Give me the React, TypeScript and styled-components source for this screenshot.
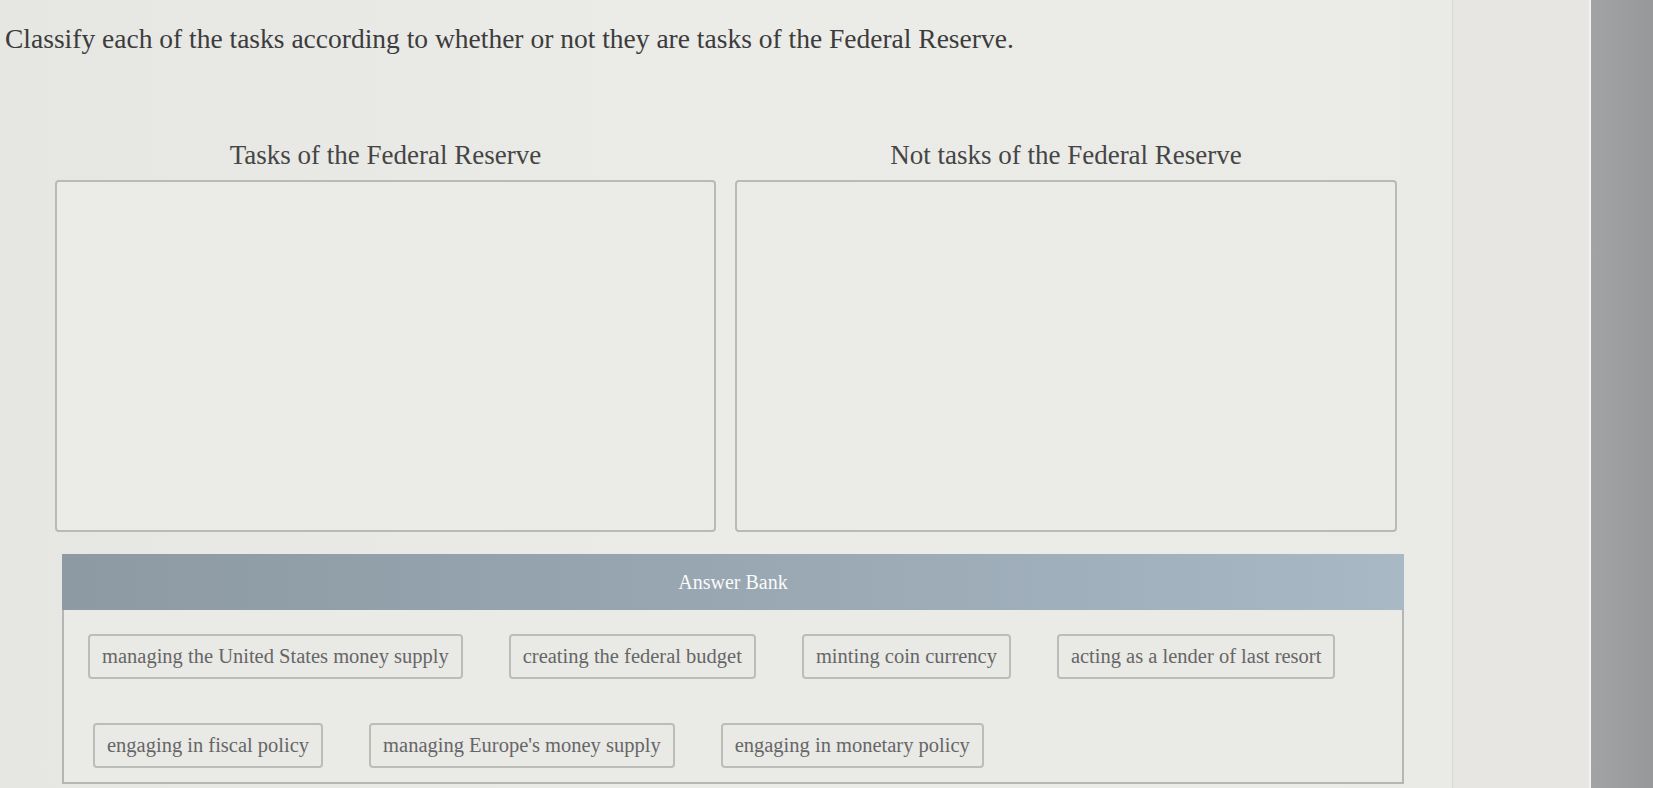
import React from 'react'
import styled, { createGlobalStyle } from 'styled-components'

const GlobalStyle = createGlobalStyle`
  html, body {
    margin: 0;
    padding: 0;
    background: #e9e9e6;
  }
  body {
    font-family: "Liberation Serif", "Times New Roman", serif;
  }
`

const Screen = styled.div`
  display: flex;
  width: 1653px;
  height: 788px;
  overflow: hidden;
  background: #e9e9e6;
`

const Content = styled.main`
  width: 1453px;
  flex: none;
  border-right: 1px solid #d8d8d4;
  padding: 23px 0 0 5px;
  box-sizing: border-box;
  background: linear-gradient(90deg, #e6e6e3 0%, #ebebe8 50%, #eaeae7 100%);
`

const SidePanel = styled.aside`
  flex: none;
  width: 136px;
  background: #e7e6e3;
  border-right: 2px solid #f2f2f0;
`

const Bezel = styled.div`
  flex: 1;
  background: linear-gradient(90deg, #a1a3a4, #96989a);
`

const Prompt = styled.h1`
  margin: 0;
  font-size: 27.5px;
  font-weight: normal;
  line-height: 32px;
  color: #3c3c3c;
`

const Categories = styled.div`
  display: grid;
  grid-template-columns: 661px 662px;
  column-gap: 19px;
  margin: 84px 0 0 50px;
`

const Category = styled.section`
  display: flex;
  flex-direction: column;
  align-items: center;
`

const CategoryLabel = styled.h2`
  margin: 0 0 9px;
  font-size: 27px;
  font-weight: normal;
  line-height: 32px;
  color: #454545;
`

const DropZone = styled.div`
  align-self: stretch;
  height: 352px;
  border: 2px solid #b9b9b6;
  border-radius: 4px;
  background: #ebebe8;
  box-sizing: border-box;
`

const Bank = styled.section`
  width: 1342px;
  margin: 22px 0 0 57px;
  border: 2px solid #b4b6b6;
  border-top: none;
  box-sizing: border-box;
  background: #eaeae7;
`

const BankHeader = styled.div`
  height: 56px;
  margin: 0 -2px;
  display: flex;
  align-items: center;
  justify-content: center;
  background: linear-gradient(90deg, #8d9aa4 0%, #98a7b2 50%, #a8b8c4 100%);
  color: #fafafa;
  font-size: 20px;
`

const ChipArea = styled.div`
  display: flex;
  flex-direction: column;
  gap: 44px;
  padding: 24px 24px 14px;
`

const ChipRow = styled.div<{ $indent?: number }>`
  display: flex;
  gap: 46px;
  padding-left: ${(p) => p.$indent ?? 0}px;
`

const Chip = styled.div`
  display: flex;
  align-items: center;
  height: 45px;
  padding: 0 12px;
  border: 2px solid #bcbcb9;
  border-radius: 4px;
  background: #e9e9e6;
  box-sizing: border-box;
  color: #666666;
  font-size: 20.5px;
  white-space: nowrap;
`

const rows = [
  [
    'managing the United States money supply',
    'creating the federal budget',
    'minting coin currency',
    'acting as a lender of last resort',
  ],
  [
    'engaging in fiscal policy',
    "managing Europe's money supply",
    'engaging in monetary policy',
  ],
]

export default function App() {
  return (
    <>
      <GlobalStyle />
      <Screen>
        <Content>
          <Prompt>
            Classify each of the tasks according to whether or not they are
            tasks of the Federal Reserve.
          </Prompt>
          <Categories>
            <Category>
              <CategoryLabel>Tasks of the Federal Reserve</CategoryLabel>
              <DropZone />
            </Category>
            <Category>
              <CategoryLabel>Not tasks of the Federal Reserve</CategoryLabel>
              <DropZone />
            </Category>
          </Categories>
          <Bank>
            <BankHeader>Answer Bank</BankHeader>
            <ChipArea>
              {rows.map((row, i) => (
                <ChipRow key={i} $indent={i * 5}>
                  {row.map((label) => (
                    <Chip key={label}>{label}</Chip>
                  ))}
                </ChipRow>
              ))}
            </ChipArea>
          </Bank>
        </Content>
        <SidePanel />
        <Bezel />
      </Screen>
    </>
  )
}
